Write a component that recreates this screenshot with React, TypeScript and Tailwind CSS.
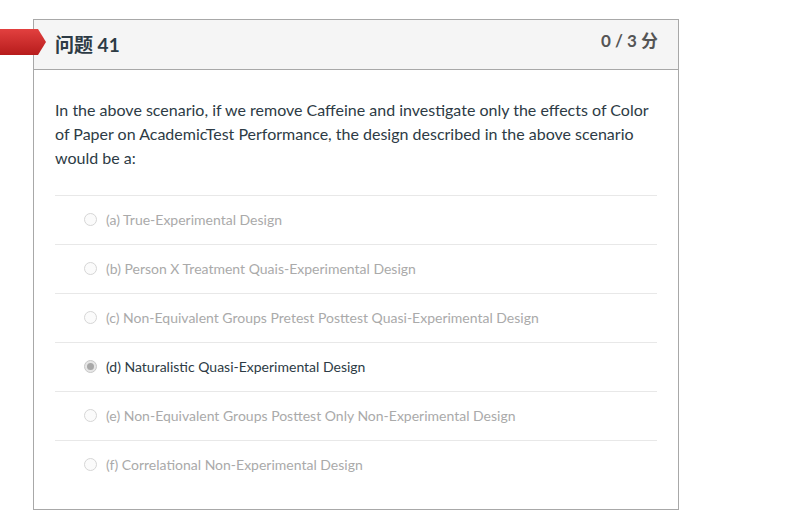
import React from "react";

const options = [
  { label: "(a) True-Experimental Design", selected: false },
  { label: "(b) Person X Treatment Quais-Experimental Design", selected: false },
  { label: "(c) Non-Equivalent Groups Pretest Posttest Quasi-Experimental Design", selected: false },
  { label: "(d) Naturalistic Quasi-Experimental Design", selected: true },
  { label: "(e) Non-Equivalent Groups Posttest Only Non-Experimental Design", selected: false },
  { label: "(f) Correlational Non-Experimental Design", selected: false },
];

function Radio({ selected }: { selected: boolean }) {
  if (selected) {
    return (
      <span className="flex h-[13px] w-[13px] items-center justify-center rounded-full border border-[#c8c8c8] bg-[#e6e6e6]">
        <span className="h-[7px] w-[7px] rounded-full bg-[#a8a8a8]" />
      </span>
    );
  }
  return <span className="block h-[13px] w-[13px] rounded-full border border-[#d6d6d6] bg-[#fbfbfb]" />;
}

export default function App() {
  return (
    <div
      className="relative min-h-[527px] w-[787px] bg-white pt-[19px] pl-[33px]"
      style={{ fontFamily: "Lato, 'Noto Sans CJK SC', sans-serif" }}
    >
      <svg className="absolute left-0 top-[29px]" width="48" height="27" viewBox="0 0 48 27">
        <defs>
          <linearGradient id="rg" x1="0" y1="0" x2="0" y2="1">
            <stop offset="0" stopColor="#e2403f" />
            <stop offset="1" stopColor="#b71c1c" />
          </linearGradient>
        </defs>
        <polygon points="0,0 38,0 46,13 38,26 0,26" fill="url(#rg)" />
      </svg>
      <div className="w-[646px] border border-[#a8a8a8] bg-white">
        <div className="flex h-[50px] items-start justify-between border-b border-[#a8a8a8] bg-[#f5f5f5] pl-[21px] pr-[20px]">
          <div className="pt-[13px] text-[19px] font-bold leading-[24px] text-[#2d3b45]">问题 41</div>
          <div className="pt-[10px] text-[17px] font-bold leading-[22px] text-[#555555]">0 / 3 分</div>
        </div>
        <div className="px-[21px] pb-[20px] pt-[28px]">
          <p className="text-[16px] leading-[24px] text-[#2d3b45]">
            In the above scenario, if we remove Caffeine and investigate only the effects of Color of Paper on AcademicTest Performance, the design described in the above scenario would be a:
          </p>
          <div className="mt-[25px]">
            {options.map((o) => (
              <div key={o.label} className="flex h-[49px] items-center border-t border-[#e8e8e8] pb-[2px] pl-[29px]">
                <Radio selected={o.selected} />
                <span
                  className={
                    "ml-[9px] text-[14px] " + (o.selected ? "text-[#2d3b45]" : "text-[#aaaaaa]")
                  }
                >
                  {o.label}
                </span>
              </div>
            ))}
          </div>
        </div>
      </div>
    </div>
  );
}
